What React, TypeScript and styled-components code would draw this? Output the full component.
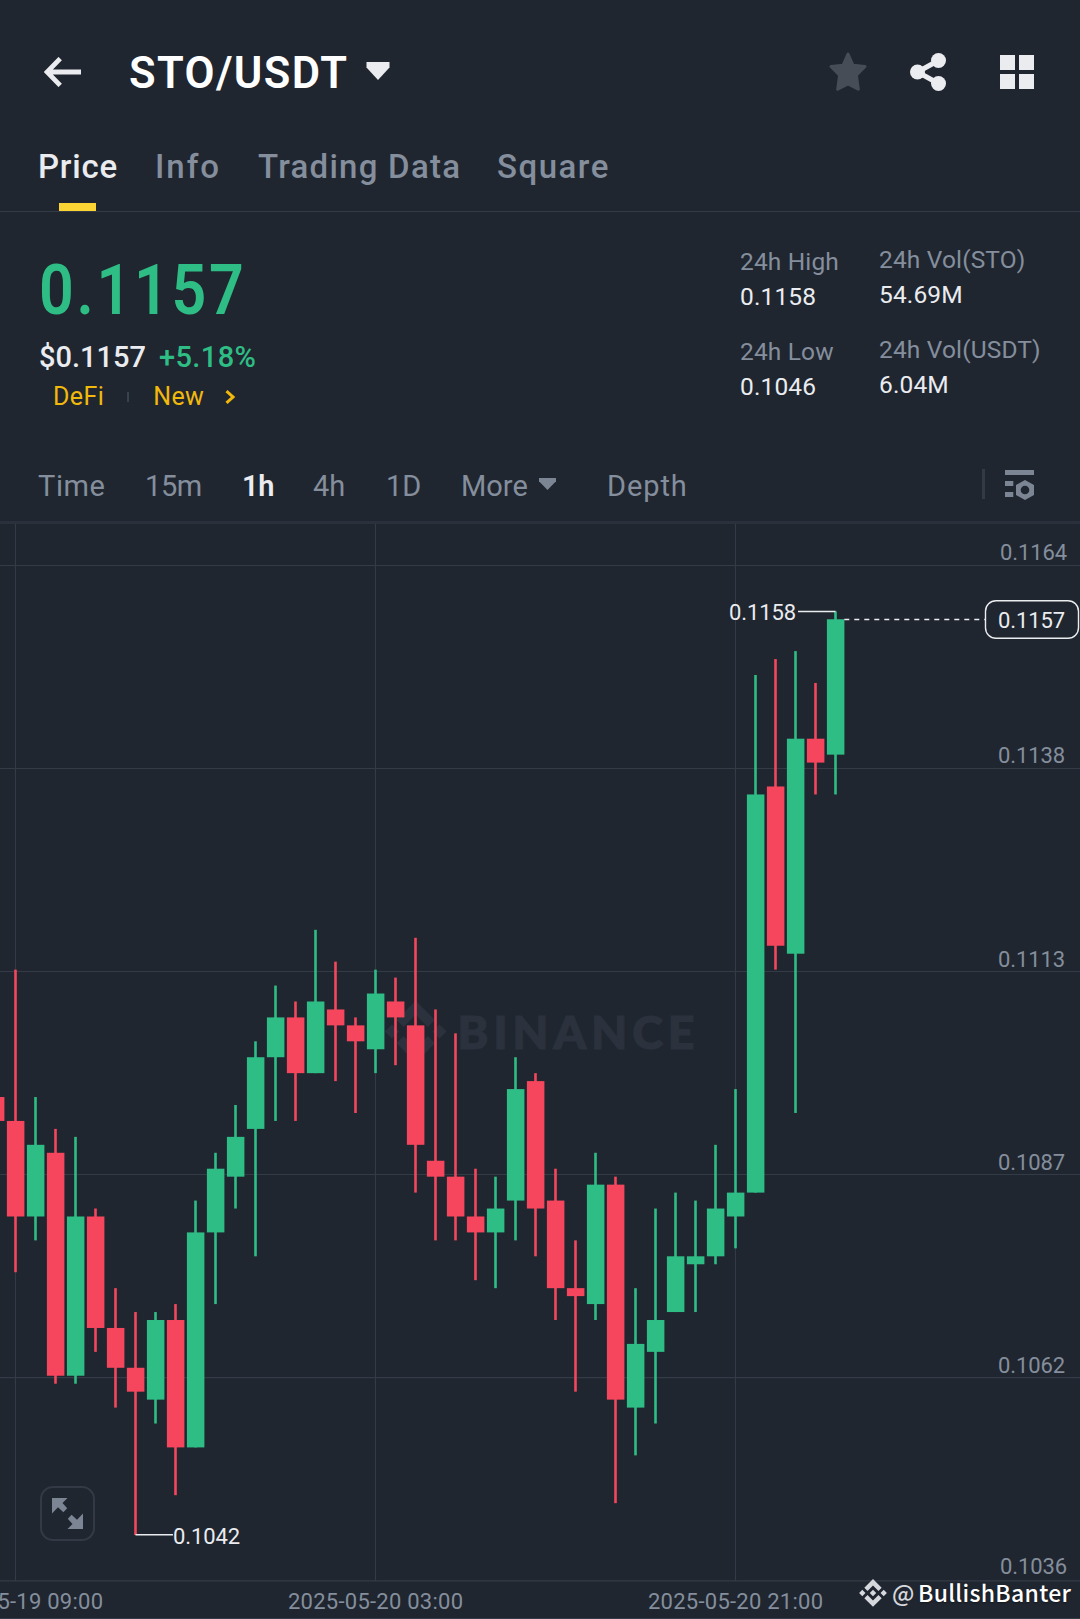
import React from 'react';
import styled, { createGlobalStyle } from 'styled-components';

const C = {
  bg: '#202630',
  line: '#333b47',
  soft: '#2b313c',
  text: '#eaecef',
  muted: '#848e9c',
  dim: '#7b8593',
  green: '#2ebd85',
  red: '#f6465d',
  yellow: '#fcd535',
  gold: '#f0b90b',
};

const FONT = 'Roboto, "Noto Sans", sans-serif';

const GlobalStyle = createGlobalStyle`
  *, *::before, *::after { box-sizing: border-box; }
  html, body { margin: 0; padding: 0; background: ${C.bg}; }
  body { overflow: hidden; font-family: ${FONT}; color: ${C.text}; }
  svg { display: block; flex: none; }
`;

const Page = styled.main`
  display: flex;
  flex-direction: column;
  width: 1080px;
  height: 1619px;
  background: ${C.bg};
  overflow: hidden;
`;

const Header = styled.header`
  display: flex;
  align-items: center;
  height: 143px;
  padding: 0 46px 0 44px;
`;

const PairName = styled.h1`
  margin: 4px 0 0 47px;
  width: 237px;
  font-size: 43.5px;
  line-height: 56px;
  font-weight: 600;
  letter-spacing: 1.4px;
  color: #fff;
  white-space: nowrap;
`;

const HeaderActions = styled.div`
  display: flex;
  align-items: center;
  margin-left: auto;
`;

const Action = styled.span<{ $gap?: number }>`
  display: flex;
  margin-left: ${(p) => p.$gap ?? 0}px;
`;

const Tabs = styled.nav`
  display: flex;
  height: 69px;
  padding: 2px 0 0 38px;
  border-bottom: 1px solid ${C.line};
`;

const Tab = styled.div<{ $w: number; $active?: boolean; $ls: number }>`
  display: flex;
  flex-direction: column;
  flex: none;
  width: ${(p) => p.$w}px;
  font-size: 33px;
  line-height: 44px;
  font-weight: 500;
  letter-spacing: ${(p) => p.$ls}px;
  white-space: nowrap;
  color: ${(p) => (p.$active ? C.text : C.muted)};
`;

const Indicator = styled.i`
  width: 37px;
  height: 8px;
  margin: 14px 0 0 21px;
  background: ${C.yellow};
`;

const Ticker = styled.section`
  display: flex;
  justify-content: space-between;
  height: 239px;
  padding-left: 39px;
`;

const PriceColumn = styled.div`
  display: flex;
  flex-direction: column;
  width: 300px;
  padding-top: 43px;
`;

const LastPrice = styled.div`
  font-size: 70px;
  line-height: 71px;
  font-weight: 600;
  letter-spacing: 3.1px;
  color: ${C.green};
  transform: scaleX(0.87);
  transform-origin: left center;
`;

const FiatRow = styled.div`
  display: flex;
  gap: 13px;
  margin-top: 13px;
  font-size: 29px;
  line-height: 36px;
  font-weight: 500;
  white-space: nowrap;
`;

const Change = styled.span`
  color: ${C.green};
  letter-spacing: 0.4px;
`;

const TagRow = styled.div`
  display: flex;
  align-items: center;
  margin-top: 7px;
  padding-left: 14px;
  font-size: 25px;
  line-height: 30px;
  letter-spacing: 0.4px;
  color: ${C.gold};
`;

const TagDivider = styled.i`
  width: 2px;
  height: 10px;
  margin: 0 24px 0 23px;
  background: #39414d;
`;

const Stats = styled.div`
  display: grid;
  grid-template-columns: 139px 201px;
  align-items: start;
`;

const StatColumn = styled.dl<{ $top: number }>`
  display: flex;
  flex-direction: column;
  gap: 20px;
  margin: 0;
  padding-top: ${(p) => p.$top}px;
  font-size: 24.5px;
  line-height: 35px;
`;

const StatLabel = styled.dt`
  color: ${C.muted};
  letter-spacing: 0.15px;
`;

const StatValue = styled.dd`
  margin: 0;
  color: ${C.text};
  letter-spacing: 0.15px;
`;

const Intervals = styled.nav`
  display: flex;
  align-items: center;
  height: 73px;
  padding: 0 46px 0 38px;
  border-bottom: 3px solid ${C.soft};
`;

const Interval = styled.div<{ $w: number; $active?: boolean; $ls?: number }>`
  display: flex;
  flex: none;
  align-items: center;
  width: ${(p) => p.$w}px;
  font-size: 29px;
  line-height: 36px;
  letter-spacing: ${(p) => p.$ls ?? 0}px;
  white-space: nowrap;
  font-weight: ${(p) => (p.$active ? 600 : 400)};
  color: ${(p) => (p.$active ? C.text : C.muted)};
`;

const MoreText = styled.span`
  width: 78px;
`;

const Raised = styled.span<{ $by: number }>`
  display: flex;
  padding-bottom: ${(p) => p.$by}px;
`;

const IntervalDivider = styled.i`
  width: 3px;
  height: 30px;
  margin: 0 20px 4px auto;
  background: #333a45;
`;

const ChartArea = styled.section`
  position: relative;
  flex: 1;
`;

const ExpandButton = styled.button`
  position: absolute;
  left: 40px;
  bottom: 78px;
  display: flex;
  align-items: center;
  justify-content: center;
  width: 55px;
  height: 55px;
  padding: 0;
  border: 2px solid #333a45;
  border-radius: 13px;
  background: ${C.bg};
`;

const Credit = styled.div`
  position: absolute;
  left: 859px;
  bottom: 8px;
  display: flex;
  align-items: center;
  height: 36px;
  font-family: "Noto Sans CJK SC", "Noto Sans", sans-serif;
  font-size: 23px;
  font-weight: 500;
  line-height: 34px;
  color: #fff;
  white-space: nowrap;
`;

const At = styled.span`
  width: 26px;
  margin: -2px 0 0 5px;
  color: #d5d8dc;
`;

const Handle = styled.span`
  margin-top: -2px;
  letter-spacing: 0.3px;
  text-shadow: 0 1px 2px rgba(0, 0, 0, 0.4);
`;

const BackIcon = () => (
  <svg width="38" height="30" viewBox="0 0 38 30" fill="none" stroke={C.text} strokeWidth="4.8">
    <path d="M2.6 15H37M16.2 1.6L3 15l13.2 13.4" />
  </svg>
);

const CaretIcon = () => (
  <svg width="24" height="18" viewBox="0 0 24 18">
    <path d="M0.5 0h23v5.6L12 18 .5 5.6z" fill={C.text} />
  </svg>
);

const SmallCaret = () => (
  <svg width="17" height="12" viewBox="0 0 17 12">
    <path d="M0 0h17v3.2L8.5 12 0 3.2z" fill={C.dim} />
  </svg>
);

const StarIcon = () => (
  <svg width="38" height="40" viewBox="0 0 38 40">
    <path
      d="M19 2l5 11.300 12 1.200-8.600 8.600 1.900 14.100L19 32 8.700 37.200l1.900-14.100L2 14.500l12-1.200z"
      fill="#474d57"
      stroke="#474d57"
      strokeWidth="3"
      strokeLinejoin="round"
    />
  </svg>
);

const ShareIcon = () => (
  <svg width="36" height="38" viewBox="0 0 36 38" fill={C.text}>
    <path d="M28.500 7.500L7.500 19l21 11.500" fill="none" stroke={C.text} strokeWidth="5" />
    <circle cx="28.500" cy="7.500" r="7.500" />
    <circle cx="7.500" cy="19" r="7.500" />
    <circle cx="28.500" cy="30.500" r="7.500" />
  </svg>
);

const GridIcon = () => (
  <svg width="34" height="34" viewBox="0 0 34 34" fill={C.text}>
    <path d="M0 0h15v15H0zM19 0h15v15H19zM0 19h15v15H0zM19 19h15v15H19z" />
  </svg>
);

const ChevronIcon = () => (
  <svg width="11" height="14" viewBox="0 0 11 14" fill="none" stroke={C.gold} strokeWidth="3">
    <path d="M1.500 1.200L8 7l-6.500 5.800" />
  </svg>
);

const SettingsIcon = () => (
  <svg width="29" height="30" viewBox="0 0 29 30" fill={C.dim}>
    <path d="M0 0h29v5H0zM0 11h8.300v5H0zM0 22h8.300v5H0z" />
    <path
      fillRule="evenodd"
      d="M20 10l9 5v10l-9 5-9-5V15zM20 15.700a4.300 4.300 0 1 0 0 8.600 4.300 4.300 0 0 0 0-8.600z"
    />
  </svg>
);

const ExpandIcon = () => (
  <svg width="31" height="31" viewBox="0 0 31 31" fill={C.dim}>
    <path d="M0 0h15.500L10.500 5l4.700 5.200-3.800 4-5.400-5L0 15.500zM31 31H15.500l5-5-4.700-5.200 3.800-4 5.400 5L31 15.500z" />
  </svg>
);

const BINANCE_PATH =
  'M38.170 53.050L63 28.220l24.840 24.840 14.450-14.450L63 -0.690 23.720 38.600zM0 62.310l14.450-14.450 14.450 14.450-14.450 14.450zM38.170 71.570L63 96.400l24.840-24.840 14.450 14.440L63 125.310 23.720 86.030zM97.110 62.310l14.450-14.450 14.450 14.450-14.450 14.450zM77.660 62.300L63 47.640 48.310 62.310 63 76.980z';

const BinanceMark = () => (
  <svg width="28" height="28" viewBox="0 -1 126 127" fill="#d5d8dc">
    <path d={BINANCE_PATH} />
  </svg>
);

// Each candle: [direction, high, body top, body bottom, low] in ticks of 0.0001.
type Candle = ['u' | 'd', number, number, number, number];
const candles: Candle[] = [
  ['d', 1097, 1097, 1094, 1094],
  ['d', 1113, 1094, 1082, 1075],
  ['u', 1097, 1091, 1082, 1079],
  ['d', 1093, 1090, 1062, 1061],
  ['u', 1092, 1082, 1062, 1061],
  ['d', 1083, 1082, 1068, 1065],
  ['d', 1073, 1068, 1063, 1058],
  ['d', 1070, 1063, 1060, 1042],
  ['u', 1070, 1069, 1059, 1056],
  ['d', 1071, 1069, 1053, 1047],
  ['u', 1084, 1080, 1053, 1053],
  ['u', 1090, 1088, 1080, 1071],
  ['u', 1096, 1092, 1087, 1083],
  ['u', 1104, 1102, 1093, 1077],
  ['u', 1111, 1107, 1102, 1094],
  ['d', 1109, 1107, 1100, 1094],
  ['u', 1118, 1109, 1100, 1100],
  ['d', 1114, 1108, 1106, 1099],
  ['d', 1107, 1106, 1104, 1095],
  ['u', 1113, 1110, 1103, 1100],
  ['d', 1112, 1109, 1107, 1101],
  ['d', 1117, 1106, 1091, 1085],
  ['d', 1108, 1089, 1087, 1079],
  ['d', 1105, 1087, 1082, 1079],
  ['d', 1088, 1082, 1080, 1074],
  ['u', 1087, 1083, 1080, 1073],
  ['u', 1102, 1098, 1084, 1079],
  ['d', 1100, 1099, 1083, 1077],
  ['d', 1088, 1084, 1073, 1069],
  ['d', 1079, 1073, 1072, 1060],
  ['u', 1090, 1086, 1071, 1069],
  ['d', 1087, 1086, 1059, 1046],
  ['u', 1073, 1066, 1058, 1052],
  ['u', 1083, 1069, 1065, 1056],
  ['u', 1085, 1077, 1070, 1070],
  ['u', 1084, 1077, 1076, 1070],
  ['u', 1091, 1083, 1077, 1076],
  ['u', 1098, 1085, 1082, 1078],
  ['u', 1150, 1135, 1085, 1085],
  ['d', 1152, 1136, 1116, 1113],
  ['u', 1153, 1142, 1115, 1095],
  ['d', 1149, 1142, 1139, 1135],
  ['u', 1158, 1157, 1140, 1135],
];

const CHART_TOP = 524;
const yOf = (tick: number) => 611.3 - CHART_TOP + (1158 - tick) * 7.963;
const xOf = (index: number) => -4.5 + index * 20;

const levels = [
  { label: '0.1164', y: 565.5, x: 1000, base: 560.2 },
  { label: '0.1138', y: 768.5, x: 998, base: 763.2 },
  { label: '0.1113', y: 971.5, x: 998, base: 967 },
  { label: '0.1087', y: 1174.5, x: 998, base: 1170 },
  { label: '0.1062', y: 1377.7, x: 998, base: 1373 },
  { label: '0.1036', y: 1580.9, x: 1000, base: 1573.8 },
];

const times = [
  { label: '2025-05-19 09:00', x: 15.5 },
  { label: '2025-05-20 03:00', x: 375.5 },
  { label: '2025-05-20 21:00', x: 735.5 },
];

const ChartSvg = styled.svg`
  font-family: ${FONT};
  font-size: 22px;
`;

const Chart = () => (
  <ChartSvg width="1080" height="1095" viewBox="0 0 1080 1095">
    {levels.map((l) => (
      <line key={l.label} x1="0" x2="1080" y1={l.y - CHART_TOP} y2={l.y - CHART_TOP} stroke={C.line} strokeWidth="1.2" />
    ))}
    {times.map((t) => (
      <line key={t.label} x1={t.x} x2={t.x} y1="0" y2="1057" stroke={C.line} strokeWidth="1.1" />
    ))}
    <line x1="0" x2="1080" y1="1094.5" y2="1094.5" stroke={C.line} />
    <g fill="#2b323d">
      <g transform="translate(384.8 477) scale(0.490)">
        <path d={BINANCE_PATH} />
      </g>
      <text
        x="457.5"
        y="525"
        fontFamily="Lato, sans-serif"
        fontSize="46.500"
        fontWeight="900"
        stroke="#2b323d"
        strokeWidth="1.2"
        textLength="237"
      >
        BINANCE
      </text>
    </g>
    {candles.map(([dir, high, top, bottom, low], i) => {
      const fill = dir === 'u' ? C.green : C.red;
      const x = xOf(i);
      return (
        <g key={i} fill={fill}>
          <rect x={x - 1.3} y={yOf(high)} width="2.600" height={yOf(low) - yOf(high)} />
          <rect x={x - 8.6} y={yOf(top)} width="17.500" height={yOf(bottom) - yOf(top)} />
        </g>
      );
    })}
    <g fill={C.muted}>
      {levels.map((l) => (
        <text key={l.label} x={l.x} y={l.base - CHART_TOP} textLength="67">
          {l.label}
        </text>
      ))}
      {times.map((t) => (
        <text key={t.label} x={t.x - 87.5} y={1608.5 - CHART_TOP} textLength="175">
          {t.label}
        </text>
      ))}
    </g>
    <g fill={C.text}>
      <text x="729" y="96" textLength="67">0.1158</text>
      <text x="173" y="1020" textLength="67">0.1042</text>
    </g>
    <g stroke={C.text} strokeWidth="1.4" fill="none">
      <path d="M798 87.500H835.500M135.500 1010.700H173" />
      <path d="M844.300 95.500H985" strokeDasharray="5 5" />
      <rect x="985.500" y="76.700" width="93" height="37.600" rx="10.500" fill={C.bg} />
    </g>
    <text x="998" y="104" textLength="67" fill={C.text}>0.1157</text>
  </ChartSvg>
);

export default function App() {
  return (
    <>
      <GlobalStyle />
      <Page>
        <Header>
          <BackIcon />
          <PairName>STO/USDT</PairName>
          <Raised $by={1}><CaretIcon /></Raised>
          <HeaderActions>
            <Action><StarIcon /></Action>
            <Action $gap={43}><ShareIcon /></Action>
            <Action $gap={54}><GridIcon /></Action>
          </HeaderActions>
        </Header>
        <Tabs>
          <Tab $w={117} $ls={0.8} $active>
            Price
            <Indicator />
          </Tab>
          <Tab $w={103} $ls={2}>Info</Tab>
          <Tab $w={239} $ls={1.25}>Trading Data</Tab>
          <Tab $w={120} $ls={1.5}>Square</Tab>
        </Tabs>
        <Ticker>
          <PriceColumn>
            <LastPrice>0.1157</LastPrice>
            <FiatRow>
              <span>$0.1157</span>
              <Change>+5.18%</Change>
            </FiatRow>
            <TagRow>
              <span>DeFi</span>
              <TagDivider />
              <span>New</span>
              <Action $gap={21}><ChevronIcon /></Action>
            </TagRow>
          </PriceColumn>
          <Stats>
            <StatColumn $top={32}>
              <div>
                <StatLabel>24h High</StatLabel>
                <StatValue>0.1158</StatValue>
              </div>
              <div>
                <StatLabel>24h Low</StatLabel>
                <StatValue>0.1046</StatValue>
              </div>
            </StatColumn>
            <StatColumn $top={30}>
              <div>
                <StatLabel>24h Vol(STO)</StatLabel>
                <StatValue>54.69M</StatValue>
              </div>
              <div>
                <StatLabel>24h Vol(USDT)</StatLabel>
                <StatValue>6.04M</StatValue>
              </div>
            </StatColumn>
          </Stats>
        </Ticker>
        <Intervals>
          <Interval $w={107} $ls={0.6}>Time</Interval>
          <Interval $w={97} $ls={-0.4}>15m</Interval>
          <Interval $w={71} $ls={-0.3} $active>1h</Interval>
          <Interval $w={73}>4h</Interval>
          <Interval $w={75}>1D</Interval>
          <Interval $w={146}>
            <MoreText>More</MoreText>
            <Raised $by={4}><SmallCaret /></Raised>
          </Interval>
          <Interval $w={80} $ls={0.9}>Depth</Interval>
          <IntervalDivider />
          <Raised $by={3}><SettingsIcon /></Raised>
        </Intervals>
        <ChartArea>
          <Chart />
          <ExpandButton aria-label="Expand chart">
            <ExpandIcon />
          </ExpandButton>
          <Credit>
            <BinanceMark />
            <At>@</At>
            <Handle>BullishBanter</Handle>
          </Credit>
        </ChartArea>
      </Page>
    </>
  );
}
